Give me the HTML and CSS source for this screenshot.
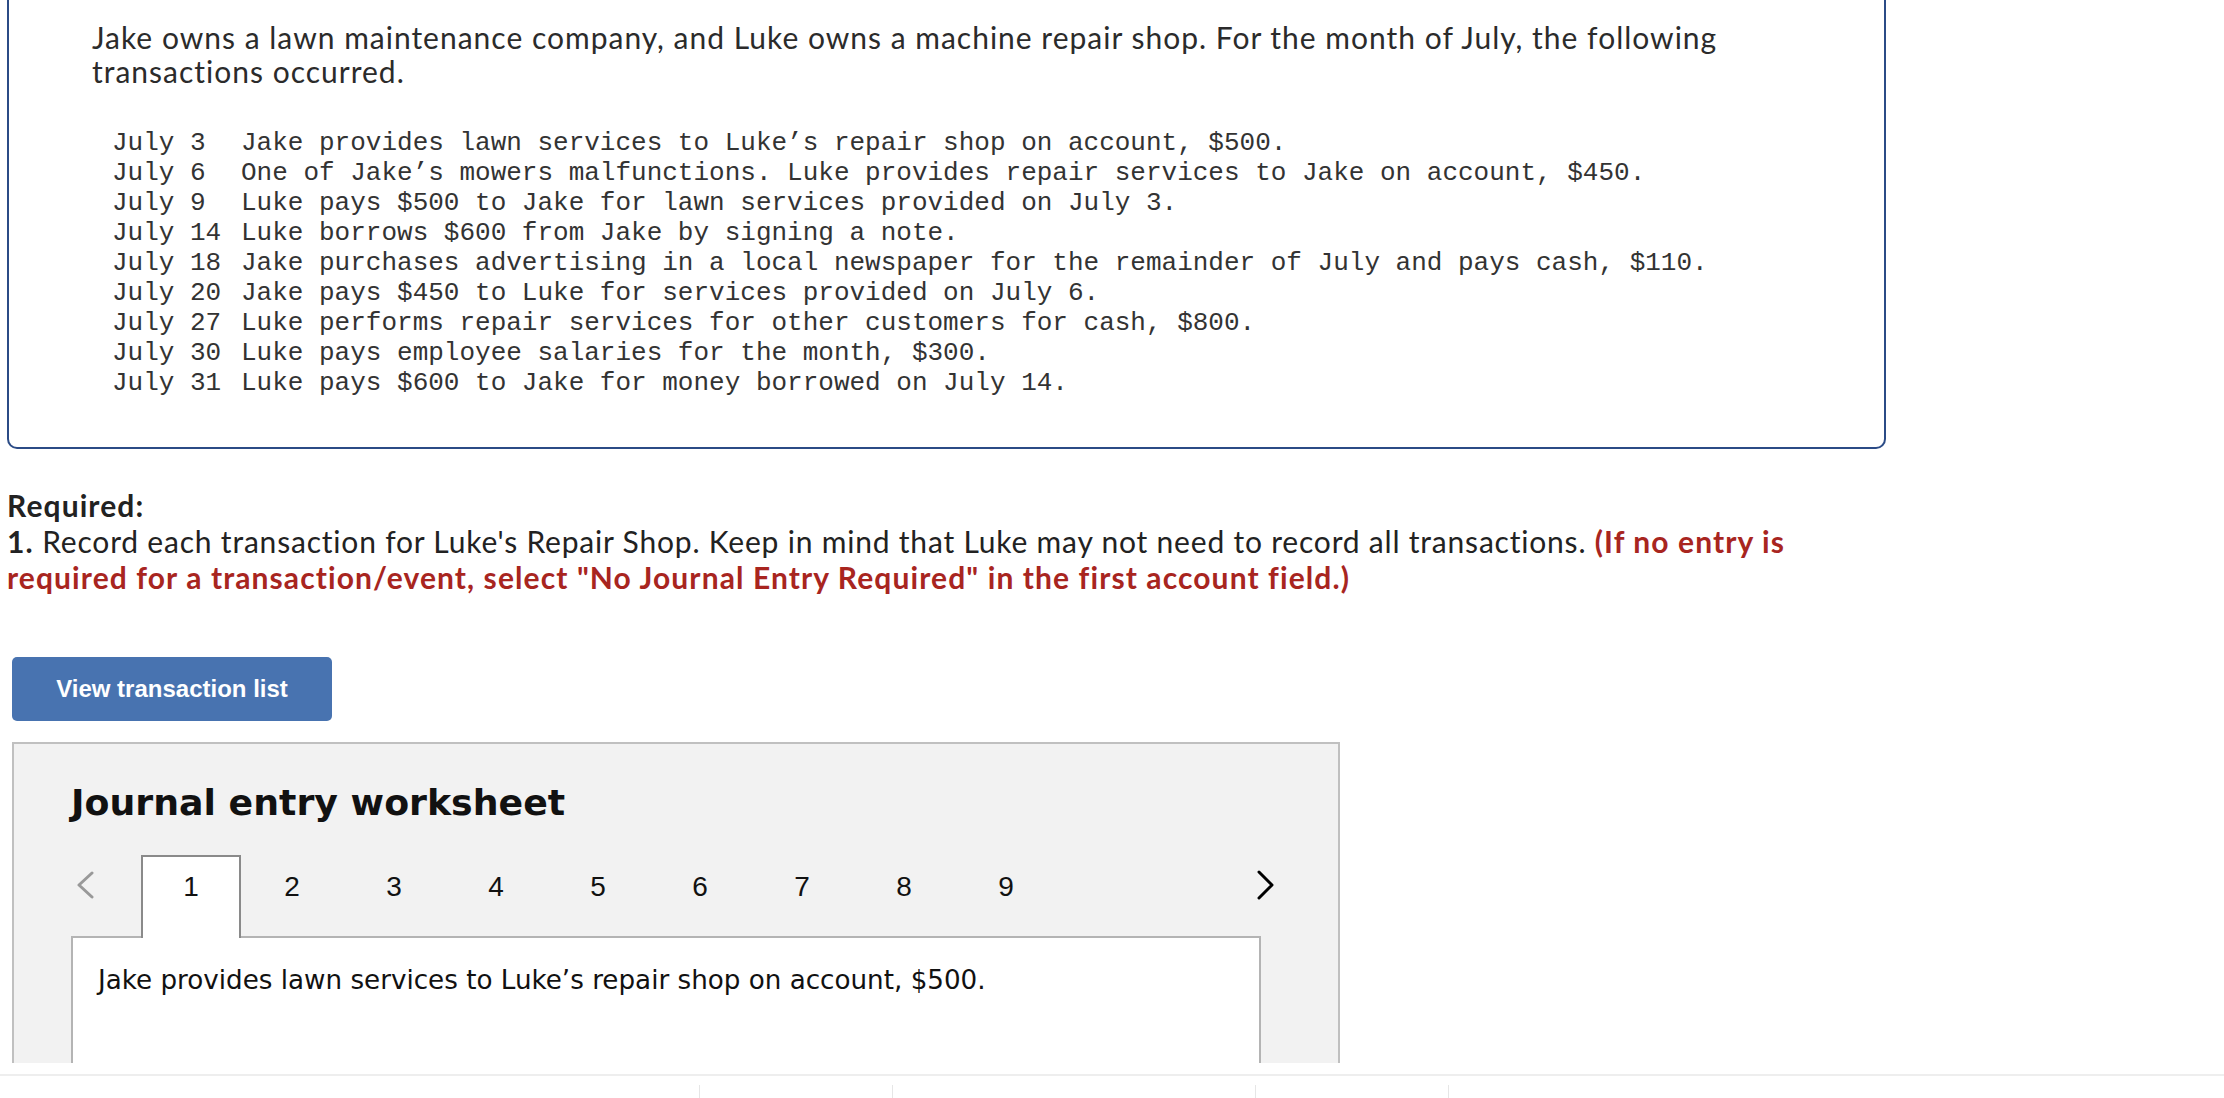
FILE: index.html
```html
<!DOCTYPE html>
<html lang="en">
<head>
<meta charset="utf-8">
<title>Journal entry worksheet</title>
<link rel="stylesheet" href="styles.css">
</head>
<body>
<main class="page">
  <section class="problem">
    <p class="intro">Jake owns a lawn maintenance company, and Luke owns a machine repair shop. For the month of July, the following<br>transactions occurred.</p>
    <div class="txns">
      <div class="txn"><span class="date">July 3</span><span class="desc">Jake provides lawn services to Luke’s repair shop on account, $500.</span></div>
      <div class="txn"><span class="date">July 6</span><span class="desc">One of Jake’s mowers malfunctions. Luke provides repair services to Jake on account, $450.</span></div>
      <div class="txn"><span class="date">July 9</span><span class="desc">Luke pays $500 to Jake for lawn services provided on July 3.</span></div>
      <div class="txn"><span class="date">July 14</span><span class="desc">Luke borrows $600 from Jake by signing a note.</span></div>
      <div class="txn"><span class="date">July 18</span><span class="desc">Jake purchases advertising in a local newspaper for the remainder of July and pays cash, $110.</span></div>
      <div class="txn"><span class="date">July 20</span><span class="desc">Jake pays $450 to Luke for services provided on July 6.</span></div>
      <div class="txn"><span class="date">July 27</span><span class="desc">Luke performs repair services for other customers for cash, $800.</span></div>
      <div class="txn"><span class="date">July 30</span><span class="desc">Luke pays employee salaries for the month, $300.</span></div>
      <div class="txn"><span class="date">July 31</span><span class="desc">Luke pays $600 to Jake for money borrowed on July 14.</span></div>
    </div>
  </section>

  <section class="required">
    <p><strong>Required:</strong><br><strong>1.</strong> Record each transaction for Luke's Repair Shop. Keep in mind that Luke may not need to record all transactions. <strong class="red">(If no entry is<br>required for a transaction/event, select "No Journal Entry Required" in the first account field.)</strong></p>
  </section>

  <button class="btn" type="button">View transaction list</button>

  <section class="worksheet">
    <h2 class="ws-title">Journal entry worksheet</h2>
    <div class="tabs">
      <span class="chev chev-left">
        <svg width="19" height="28" viewBox="0 0 19 28"><path d="M16 2 L3 14 L16 26" fill="none" stroke="#999" stroke-width="3" stroke-linecap="round" stroke-linejoin="round"/></svg>
      </span>
      <span class="tab active">1</span>
      <span class="tab">2</span>
      <span class="tab">3</span>
      <span class="tab">4</span>
      <span class="tab">5</span>
      <span class="tab">6</span>
      <span class="tab">7</span>
      <span class="tab">8</span>
      <span class="tab">9</span>
      <span class="chev chev-right">
        <svg width="19" height="30" viewBox="0 0 19 30"><path d="M3 2 L16 15 L3 28" fill="none" stroke="#000" stroke-width="3" stroke-linecap="round" stroke-linejoin="round"/></svg>
      </span>
    </div>
    <div class="entry">
      <p class="entry-text">Jake provides lawn services to Luke’s repair shop on account, $500.</p>
    </div>
  </section>
</main>

<footer class="footer">
  <div class="footer-line"></div>
  <div class="footer-cells">
    <span class="fcell fcell-a"></span>
    <span class="fcell fcell-b"></span>
    <span class="fcell fcell-c"></span>
    <span class="fcell fcell-d"></span>
  </div>
</footer>
</body>
</html>
```

FILE: styles.css
```css
* { box-sizing: border-box; }

html, body {
  margin: 0;
  padding: 0;
  background: #ffffff;
}

body {
  width: 2224px;
  height: 1098px;
  overflow: hidden;
  font-family: Lato, "Open Sans", sans-serif;
  color: #2b2b2b;
}

.page {
  display: flex;
  flex-direction: column;
  align-items: flex-start;
}

/* ---------- problem box ---------- */
.problem {
  margin-left: 7px;
  width: 1879px;
  border: 2px solid #2b4b86;
  border-top: none;
  border-radius: 0 0 10px 10px;
  padding: 20px 0 49px 83px;
}

.intro {
  margin: 0;
  font-size: 30px;
  line-height: 34px;
  letter-spacing: 1px;
  color: #2b2b2b;
  white-space: nowrap;
}

.txns {
  margin-top: 40px;
  margin-left: 20px;
  font-family: "Liberation Mono", "Courier New", monospace;
  font-size: 26px;
  line-height: 30px;
  color: #333333;
}

.txn {
  display: grid;
  grid-template-columns: 129px auto;
  white-space: pre;
}

/* ---------- required ---------- */
.required {
  margin: 38px 0 0 7px;
}

.required p {
  margin: 0;
  font-size: 30px;
  line-height: 36px;
  letter-spacing: 0.8px;
  color: #222222;
  white-space: nowrap;
}

.required strong {
  font-weight: 700;
  letter-spacing: 1.1px;
}

.red { color: #a8251f; }

/* ---------- button ---------- */
.btn {
  margin: 62px 0 0 12px;
  width: 320px;
  height: 64px;
  border: none;
  border-radius: 5px;
  background: #4873b0;
  color: #ffffff;
  font-family: "Liberation Sans", Arial, sans-serif;
  font-weight: 700;
  font-size: 24px;
  padding: 0;
}

/* ---------- worksheet ---------- */
.worksheet {
  margin: 21px 0 0 12px;
  width: 1328px;
  min-height: 420px;
  background: #f2f2f2;
  border: 2px solid #c0c0c0;
  padding: 37px 77px 0 57px;
}

.ws-title {
  margin: 0;
  font-family: "DejaVu Sans", Verdana, sans-serif;
  font-weight: 700;
  font-size: 36.3px;
  line-height: 44px;
  color: #111111;
}

.tabs {
  margin-top: 30px;
  height: 81px;
  display: flex;
  align-items: flex-start;
}

.chev {
  display: flex;
}

.chev-left {
  width: 70px;
  padding: 16px 0 0 5px;
}

.chev-right {
  margin-left: auto;
  margin-right: -14px;
  padding-top: 15px;
}

.tab {
  width: 102px;
  height: 81px;
  padding-top: 13px;
  border: 2px solid transparent;
  border-bottom: none;
  text-align: center;
  font-family: "Liberation Sans", Arial, sans-serif;
  font-size: 28px;
  line-height: 34px;
  color: #111111;
}

.tab.active {
  width: 100px;
  height: 83px;
  background: #ffffff;
  border-color: #8a8a8a;
  position: relative;
  z-index: 1;
}

.entry {
  background: #ffffff;
  border: 2px solid #b4b4b4;
  min-height: 240px;
  padding: 25px 25px;
}

.entry-text {
  margin: 0;
  font-family: "DejaVu Sans", Verdana, sans-serif;
  font-size: 26.2px;
  line-height: 34px;
  color: #111111;
}

/* ---------- footer ---------- */
.footer {
  position: fixed;
  left: 0;
  right: 0;
  bottom: 0;
  height: 35px;
  background: #ffffff;
}

.footer-line {
  margin-top: 11px;
  height: 2px;
  background: #eeeeee;
}

.footer-cells {
  margin-top: 9px;
  height: 13px;
  display: flex;
}

.fcell { height: 100%; }
.fcell-a { width: 700px; border-right: 1px solid #e6e6e6; }
.fcell-b { width: 193px; border-right: 1px solid #e6e6e6; }
.fcell-c { width: 363px; border-right: 1px solid #e6e6e6; }
.fcell-d { width: 193px; border-right: 1px solid #e6e6e6; }
```
